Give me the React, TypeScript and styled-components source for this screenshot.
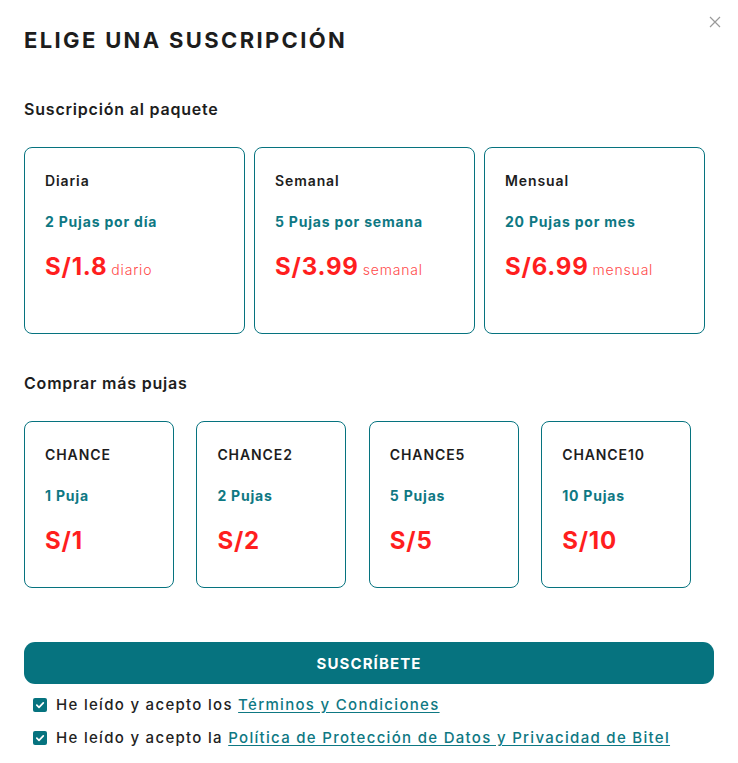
import styled, { createGlobalStyle } from 'styled-components';

const colors = {
  teal: '#06737f',
  tealText: '#0e7883',
  red: '#ff1e1e',
  redLight: '#ff4a4a',
  black: '#1d1d1d',
  gray: '#9a9a9a',
};

type Plan = { name: string; detail: string; price: string; period?: string };

const subscriptions: Plan[] = [
  { name: 'Diaria', detail: '2 Pujas por día', price: 'S/1.8', period: 'diario' },
  { name: 'Semanal', detail: '5 Pujas por semana', price: 'S/3.99', period: 'semanal' },
  { name: 'Mensual', detail: '20 Pujas por mes', price: 'S/6.99', period: 'mensual' },
];

const chances: Plan[] = [
  { name: 'CHANCE', detail: '1 Puja', price: 'S/1' },
  { name: 'CHANCE2', detail: '2 Pujas', price: 'S/2' },
  { name: 'CHANCE5', detail: '5 Pujas', price: 'S/5' },
  { name: 'CHANCE10', detail: '10 Pujas', price: 'S/10' },
];

function CheckIcon() {
  return (
    <svg width="10" height="10" viewBox="0 0 10 10" fill="none">
      <path
        d="M1.8 5.2 L4 7.3 L8.3 2.8"
        stroke="#fff"
        strokeWidth="1.7"
        strokeLinecap="round"
        strokeLinejoin="round"
      />
    </svg>
  );
}

export default function App() {
  return (
    <>
      <GlobalStyle />
      <Modal>
        <CloseButton aria-label="Cerrar">
          <svg width="12" height="12" viewBox="0 0 12 12">
            <path d="M1 1 L11 11 M11 1 L1 11" stroke={colors.gray} strokeWidth="1.2" />
          </svg>
        </CloseButton>
        <Title>ELIGE UNA SUSCRIPCIÓN</Title>

        <SectionTitle>Suscripción al paquete</SectionTitle>
        <CardRow $gap={9}>
          {subscriptions.map((p) => (
            <Card key={p.name} $width={221} $height={187}>
              <CardName>{p.name}</CardName>
              <CardDetail>{p.detail}</CardDetail>
              <Price>
                {p.price}
                {p.period && <Period>{p.period}</Period>}
              </Price>
            </Card>
          ))}
        </CardRow>

        <SectionTitle>Comprar más pujas</SectionTitle>
        <CardRow $gap={22.4}>
          {chances.map((p) => (
            <Card key={p.name} $width={150} $height={167}>
              <CardName>{p.name}</CardName>
              <CardDetail>{p.detail}</CardDetail>
              <Price>{p.price}</Price>
            </Card>
          ))}
        </CardRow>

        <SubmitButton>SUSCRÍBETE</SubmitButton>

        <Checks>
          <CheckRow>
            <Box>
              <CheckIcon />
            </Box>
            <span>
              He leído y acepto los <Link href="#">Términos y Condiciones</Link>
            </span>
          </CheckRow>
          <CheckRow>
            <Box>
              <CheckIcon />
            </Box>
            <span>
              He leído y acepto la{' '}
              <Link href="#">Política de Protección de Datos y Privacidad de Bitel</Link>
            </span>
          </CheckRow>
        </Checks>
      </Modal>
    </>
  );
}

const GlobalStyle = createGlobalStyle`
  body {
    margin: 0;
    background: #fff;
    font-family: Inter, "Open Sans", sans-serif;
    color: ${colors.black};
  }
`;

const Modal = styled.div`
  position: relative;
  width: 738px;
  height: 763px;
  box-sizing: border-box;
  padding: 26px 24px 0;
  display: flex;
  flex-direction: column;
  background: #fff;
`;

const CloseButton = styled.button`
  position: absolute;
  top: 16px;
  right: 17px;
  width: 12px;
  height: 12px;
  padding: 0;
  border: none;
  background: none;
  display: flex;
`;

const Title = styled.h1`
  margin: 0;
  font-size: 22px;
  line-height: 28px;
  font-weight: 700;
  letter-spacing: 2.35px;
  color: ${colors.black};
`;

const SectionTitle = styled.h2`
  margin: 0;
  font-size: 16px;
  line-height: 20px;
  font-weight: 600;
  letter-spacing: 0.8px;
  &:first-of-type {
    margin-top: 45px;
  }
  & + div {
    margin-top: 28px;
  }
  div + & {
    margin-top: 39px;
  }
`;

const CardRow = styled.div<{ $gap: number }>`
  display: flex;
  gap: ${(p) => p.$gap}px;
`;

const Card = styled.div<{ $width: number; $height: number }>`
  width: ${(p) => p.$width}px;
  height: ${(p) => p.$height}px;
  box-sizing: border-box;
  border: 1px solid ${colors.teal};
  border-radius: 8px;
  padding: 23px 20px 0;
  display: flex;
  flex-direction: column;
`;

const CardName = styled.div`
  font-size: 14px;
  line-height: 20px;
  font-weight: 600;
  letter-spacing: 0.9px;
`;

const CardDetail = styled.div`
  margin-top: 21px;
  font-size: 14px;
  line-height: 20px;
  font-weight: 700;
  letter-spacing: 0.8px;
  color: ${colors.tealText};
`;

const Price = styled.div`
  margin-top: 20px;
  font-size: 24px;
  line-height: 30px;
  font-weight: 700;
  letter-spacing: 0.8px;
  color: ${colors.red};
  display: flex;
  align-items: baseline;
  gap: 4px;
`;

const Period = styled.span`
  font-size: 14px;
  font-weight: 300;
  letter-spacing: 0.8px;
  color: ${colors.redLight};
`;

const SubmitButton = styled.button`
  margin-top: 54px;
  height: 42px;
  width: 100%;
  border: none;
  border-radius: 11px;
  background: ${colors.teal};
  color: #fff;
  font-family: inherit;
  font-size: 15px;
  font-weight: 700;
  letter-spacing: 1.1px;
  cursor: pointer;
`;

const Checks = styled.div`
  margin-top: 11px;
  padding-left: 9px;
  display: flex;
  flex-direction: column;
  gap: 13px;
`;

const CheckRow = styled.label`
  display: flex;
  align-items: center;
  gap: 9px;
  font-size: 15px;
  line-height: 20px;
  font-weight: 500;
  letter-spacing: 1.3px;
  color: #222;
`;

const Box = styled.span`
  width: 14px;
  height: 14px;
  border-radius: 2px;
  background: ${colors.teal};
  display: flex;
  align-items: center;
  justify-content: center;
  flex-shrink: 0;
`;

const Link = styled.a`
  color: ${colors.tealText};
  text-decoration: underline;
  text-underline-offset: 2px;
`;
